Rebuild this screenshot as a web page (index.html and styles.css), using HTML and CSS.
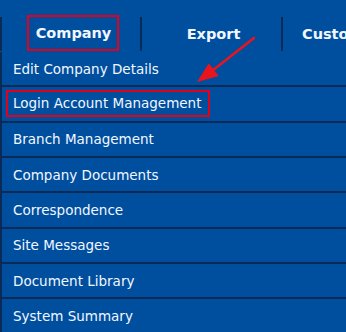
FILE: index.html
```html
<!DOCTYPE html>
<html>
<head>
<meta charset="utf-8">
<link rel="stylesheet" href="styles.css">
</head>
<body>
<div class="page">
  <nav class="nav">
    <div class="nav-item first"><span class="highlight-nav">Company</span></div>
    <div class="nav-item">Export</div>
    <div class="nav-item last">Customers</div>
  </nav>
  <ul class="menu">
    <li class="menu-row">Edit Company Details</li>
    <li class="menu-row"><span class="highlight-row">Login Account Management</span></li>
    <li class="menu-row">Branch Management</li>
    <li class="menu-row">Company Documents</li>
    <li class="menu-row">Correspondence</li>
    <li class="menu-row">Site Messages</li>
    <li class="menu-row">Document Library</li>
    <li class="menu-row">System Summary</li>
  </ul>
  <svg class="arrow" width="346" height="332" viewBox="0 0 346 332">
    <line x1="254" y1="38" x2="210" y2="72.5" stroke="#e8141e" stroke-width="2.6" stroke-linecap="round"/>
    <polygon points="197,82 208.8,63.3 218.7,75.9" fill="#e8141e"/>
  </svg>
</div>
</body>
</html>
```
FILE: styles.css
```css
html, body {
  margin: 0;
  padding: 0;
}
body {
  width: 346px;
  height: 332px;
  overflow: hidden;
  background: #004f9f;
  font-family: "DejaVu Sans", Verdana, sans-serif;
  color: #f2f7ff;
}
.page {
  position: relative;
  width: 346px;
  height: 332px;
  overflow: hidden;
}
.nav {
  display: flex;
  height: 52px;
  padding-top: 17px;
  box-sizing: border-box;
}
.nav-item {
  flex-shrink: 0;
  width: 135px;
  height: 34px;
  border-left: 2px solid #0b2a55;
  display: flex;
  align-items: center;
  justify-content: center;
  padding-left: 4px;
  font-weight: bold;
  font-size: 14.5px;
  white-space: nowrap;
}
.nav-item.first {
  width: 134px;
}
.nav-item.last {
  width: auto;
  justify-content: flex-start;
  padding-left: 19px;
}
.highlight-nav {
  display: inline-block;
  height: 32px;
  line-height: 32px;
  margin-top: -2px;
  padding: 0 6px 0 7px;
  border: 2px solid #e3001b;
}
.menu {
  list-style: none;
  margin: 0;
  padding: 0;
  border-left: 2px solid #0b2a55;
}
.menu-row {
  height: 33.33px;
  border-bottom: 2px solid #0b2a55;
  display: flex;
  align-items: center;
  padding-left: 11px;
  font-size: 13.5px;
  white-space: nowrap;
}
.highlight-row {
  display: inline-block;
  height: 23px;
  line-height: 23px;
  margin-left: -7px;
  padding: 0 7px 0 5px;
  border: 2px solid #e3001b;
}
.arrow {
  position: absolute;
  left: 0;
  top: 0;
  pointer-events: none;
}
```
